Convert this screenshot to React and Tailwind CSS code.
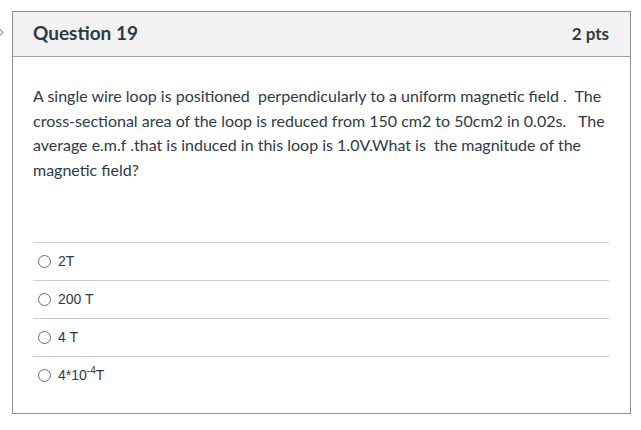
import React from 'react';

const answers = [
  { id: 1, label: <>2T</> },
  { id: 2, label: <>200 T</> },
  { id: 3, label: <>4 T</> },
  { id: 4, label: <>4*10<sup className="text-[10px] -top-[6px]">-4</sup>T</> },
];

const App = () => {
  return (
    <div className="w-[641px] h-[430px] bg-white relative" style={{ fontFamily: 'Lato, "Noto Sans", sans-serif' }}>
      <svg className="absolute left-[-3px] top-[27px]" width="8" height="11" viewBox="0 0 8 11">
        <path d="M1.5 1 L6 5.5 L1.5 10" fill="none" stroke="#9a9a9a" strokeWidth="1.2" />
      </svg>
      <div className="absolute left-[12px] top-[11px] w-[619px] h-[403px] border border-[#8f8f8f] flex flex-col">
        <div className="h-[45px] bg-[#f2f2f2] border-b border-[#a0a0a0] flex items-center justify-between pl-[20px] pr-[21px] pb-[1px]">
          <h2 className="text-[19px] font-bold text-[#2d3b45]">Question 19</h2>
          <span className="text-[17px] font-bold text-[#2d3b45]">2 pts</span>
        </div>
        <div className="pl-[20px] pr-[20px] pt-[27px]">
          <p className="text-[16px] leading-[24.5px] text-[#2d3b45] w-[578px]">
            A single wire loop is positioned&nbsp; perpendicularly to a uniform magnetic field .&nbsp; The cross-sectional area of the loop is reduced from 150 cm2 to 50cm2 in 0.02s.&nbsp;&nbsp; The average e.m.f .that is induced in this loop is 1.0V.What is&nbsp; the magnitude of the magnetic field?
          </p>
          <div className="mt-[60px] w-[576px]">
            {answers.map((a) => (
              <div
                key={a.id}
                className="h-[38px] border-t border-[#c7cdd1] flex items-center"
              >
                <span className="ml-[5px] w-[13px] h-[13px] rounded-full border border-[#6b6b6b] bg-white"></span>
                <span className="ml-[7px] text-[14px] text-[#2d3b45]" style={{ fontFamily: '"Liberation Sans", Arial, sans-serif' }}>
                  {a.label}
                </span>
              </div>
            ))}
          </div>
        </div>
      </div>
    </div>
  );
};

export default App;
